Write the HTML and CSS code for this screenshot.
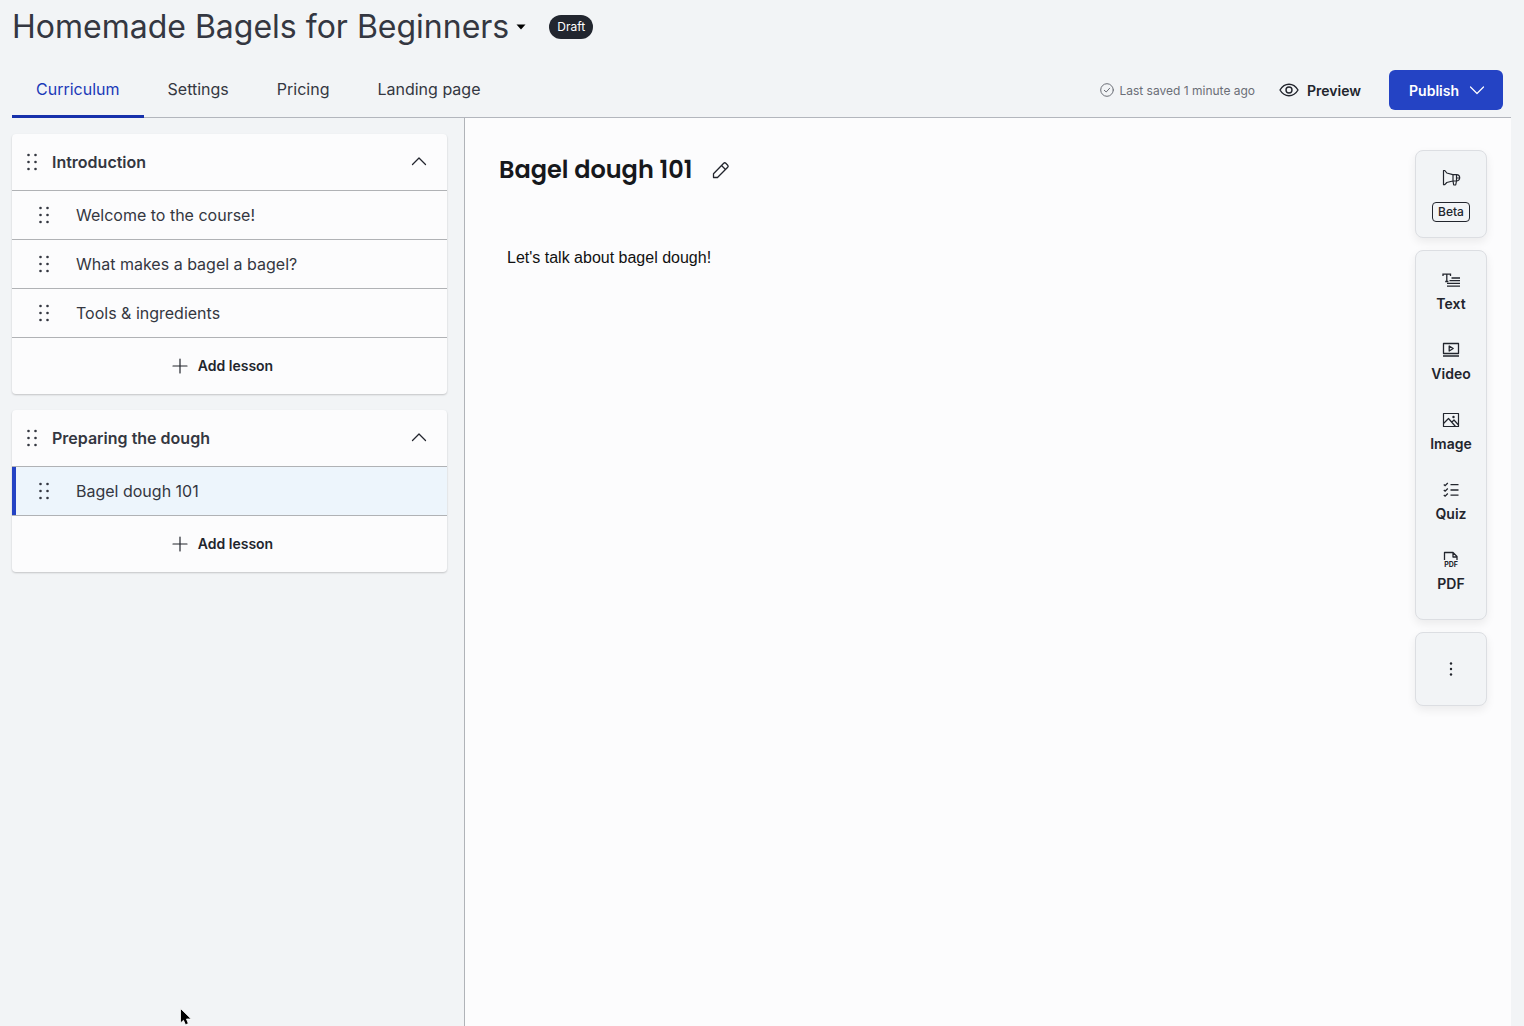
FILE: index.html
```html
<!DOCTYPE html>
<html lang="en">
<head>
    <meta charset="UTF-8">
    <meta name="viewport" content="width=device-width, initial-scale=1.0">
    <title>Homemade Bagels for Beginners</title>
    <link rel="stylesheet" href="styles.css">
</head>
<body>
    <!-- Shared icons -->
    <svg class="sprite" aria-hidden="true">
        <symbol id="grip" viewBox="0 0 12 18">
            <g fill="currentColor">
                <circle cx="2.500" cy="2" r="1.300"/><circle cx="9.500" cy="2" r="1.300"/>
                <circle cx="2.500" cy="9" r="1.300"/><circle cx="9.500" cy="9" r="1.300"/>
                <circle cx="2.500" cy="16" r="1.300"/><circle cx="9.500" cy="16" r="1.300"/>
            </g>
        </symbol>
        <symbol id="chevron-up" viewBox="0 0 16 16">
            <path d="M1.500 10.500 8 4l6.500 6.500" fill="none" stroke="currentColor" stroke-width="1.300" stroke-linecap="round" stroke-linejoin="round"/>
        </symbol>
        <symbol id="plus" viewBox="0 0 16 16">
            <path d="M8 1v14M1 8h14" fill="none" stroke="currentColor" stroke-width="1.200" stroke-linecap="round"/>
        </symbol>
    </svg>

    <header class="page-header">
        <div class="title-row">
            <h1>Homemade Bagels for Beginners</h1>
            <button class="title-menu" type="button" aria-label="Switch course">
                <svg width="10" height="6" viewBox="0 0 10 6"><path d="M0.500 0.500h9L5 5.500z" fill="currentColor"/></svg>
            </button>
            <span class="status">Draft</span>
        </div>
        <div class="nav-row">
            <nav class="tabs">
                <a class="tab active" href="#curriculum">Curriculum</a>
                <a class="tab" href="#settings">Settings</a>
                <a class="tab" href="#pricing">Pricing</a>
                <a class="tab" href="#landing">Landing page</a>
            </nav>
            <div class="actions">
                <span class="saved">
                    <svg width="14" height="14" viewBox="0 0 14 14" fill="none" stroke="currentColor" stroke-linecap="round" stroke-linejoin="round"><circle cx="7" cy="7" r="6.300"/><path d="M4.300 7.300 6.200 9l3.500-3.800"/></svg>
                    Last saved 1 minute ago
                </span>
                <button class="preview" type="button">
                    <svg width="20" height="14" viewBox="0 0 20 14" fill="none" stroke="currentColor" stroke-width="1.400" stroke-linejoin="round"><path d="M1 7c2.200-3.700 5.300-5.800 9-5.800S16.800 3.300 19 7c-2.200 3.700-5.300 5.800-9 5.800S3.200 10.700 1 7z"/><circle cx="10" cy="7" r="3"/></svg>
                    Preview
                </button>
                <button class="publish" type="button">
                    Publish
                    <svg width="16" height="16" viewBox="0 0 16 16" fill="none" stroke="currentColor" stroke-width="1.200" stroke-linecap="round" stroke-linejoin="round"><path d="M1.500 5 8 11.500 14.500 5"/></svg>
                </button>
            </div>
        </div>
    </header>

    <div class="workspace">
        <aside class="outline">
            <section class="chapter">
                <div class="chapter-head">
                    <svg class="grip"><use href="#grip"/></svg>
                    <h2>Introduction</h2>
                    <button class="collapse" type="button" aria-label="Collapse Introduction"><svg width="16" height="16"><use href="#chevron-up"/></svg></button>
                </div>
                <ul>
                    <li><svg class="grip"><use href="#grip"/></svg><a href="#welcome">Welcome to the course!</a></li>
                    <li><svg class="grip"><use href="#grip"/></svg><a href="#what">What makes a bagel a bagel?</a></li>
                    <li><svg class="grip"><use href="#grip"/></svg><a href="#tools">Tools &amp; ingredients</a></li>
                </ul>
                <button class="add-lesson" type="button"><svg width="16" height="16"><use href="#plus"/></svg>Add lesson</button>
            </section>
            <section class="chapter">
                <div class="chapter-head">
                    <svg class="grip"><use href="#grip"/></svg>
                    <h2>Preparing the dough</h2>
                    <button class="collapse" type="button" aria-label="Collapse Preparing the dough"><svg width="16" height="16"><use href="#chevron-up"/></svg></button>
                </div>
                <ul>
                    <li class="selected"><svg class="grip"><use href="#grip"/></svg><a href="#dough">Bagel dough 101</a></li>
                </ul>
                <button class="add-lesson" type="button"><svg width="16" height="16"><use href="#plus"/></svg>Add lesson</button>
            </section>
        </aside>

        <main class="editor">
            <article class="lesson">
                <div class="lesson-title">
                    <h2>Bagel dough 101</h2>
                    <button type="button" aria-label="Edit title">
                        <svg width="18" height="18" viewBox="0 0 18 18" fill="none" stroke="currentColor" stroke-width="1.300" stroke-linejoin="round"><path d="M1.500 16.500v-3.800L11.700 2.300a1.500 1.500 0 0 1 2.100 0l1.900 1.900a1.500 1.500 0 0 1 0 2.100L5.500 16.500z"/><path d="m9.500 4.500 4 4"/></svg>
                    </button>
                </div>
                <p class="lesson-text">Let's talk about bagel dough!</p>
            </article>

            <div class="toolbar">
                <div class="panel">
                    <button class="tool announce" type="button">
                        <svg width="20" height="20" viewBox="0 0 20 20" fill="none" stroke="currentColor" stroke-width="1.200" stroke-linejoin="round"><path d="M2.500 2.500v14.200h1.300l2-2.200 6-1.500h3.700a3.200 3.200 0 0 0 0-6.400h-3.700l-6-1.600-2-2.500zM12 6.600V13l.7 4h2l.8-4M15.500 6.600V13M15.500 10h3.200"/></svg>
                        <span class="beta">Beta</span>
                    </button>
                </div>
                <div class="panel blocks">
                    <button class="tool" type="button">
                        <svg width="20" height="20" viewBox="0 0 20 20" fill="none" stroke="currentColor" stroke-width="1.300"><path d="M2 5V3.200h7.500V5M5.800 3.200v7.300M4.200 10.500h3.200M10.500 7h8.500M8.500 9.600h10.500M6 12.400h13M6 15.200h13"/></svg>
                        Text
                    </button>
                    <button class="tool" type="button">
                        <svg width="20" height="20" viewBox="0 0 20 20" fill="none" stroke="currentColor" stroke-width="1.300" stroke-linejoin="round"><rect x="2.500" y="2.500" width="15" height="10"/><path d="M8.200 5v5l4-2.500zM2 15h16"/></svg>
                        Video
                    </button>
                    <button class="tool" type="button">
                        <svg width="20" height="20" viewBox="0 0 20 20" fill="none" stroke="currentColor" stroke-width="1.200" stroke-linejoin="round"><rect x="2.500" y="2.500" width="15" height="13"/><path d="m2.500 12.500 5-5 7 8M11 11l2-2 4.500 5"/><circle cx="12.500" cy="6" r=".6" fill="currentColor"/></svg>
                        Image
                    </button>
                    <button class="tool" type="button">
                        <svg width="20" height="20" viewBox="0 0 20 20" fill="none" stroke="currentColor" stroke-width="1.300"><path d="m2.800 3.500 1.300 1.200L6.800 2M2.800 9l1.300 1.200 2.700-2.700M2.800 14l1.300 1.200 2.700-2.700M9.500 3.700h8M9.500 9h8M9.500 14.200h8"/></svg>
                        Quiz
                    </button>
                    <button class="tool" type="button">
                        <svg width="20" height="20" viewBox="0 0 20 20" fill="none" stroke="currentColor" stroke-width="1.300" stroke-linejoin="round"><path d="M3.500 9V1.500h8.500l4 4V9M12 1.500V6h4"/><text class="pdf-mark" x="10" y="16" text-anchor="middle">PDF</text></svg>
                        PDF
                    </button>
                </div>
                <div class="panel">
                    <button class="tool more" type="button" aria-label="More blocks">
                        <svg width="20" height="20" viewBox="0 0 20 20" fill="currentColor"><circle cx="10" cy="4.500" r="1.200"/><circle cx="10" cy="10" r="1.200"/><circle cx="10" cy="15.500" r="1.200"/></svg>
                    </button>
                </div>
            </div>
        </main>
    </div>

    <svg class="pointer" width="12" height="18" viewBox="0 0 12 18" aria-hidden="true"><path d="M.5.500v14.500l3-2.700 2 4.500 2.800-1.200L6.500 11h4.700z" fill="#000" stroke="#fff" stroke-width=".8"/></svg>
</body>
</html>
```

FILE: styles.css
```css
* {
    box-sizing: border-box;
}
body {
    margin: 0;
    min-height: 100vh;
    display: flex;
    flex-direction: column;
    position: relative;
    font-family: Inter, "Liberation Sans", sans-serif;
    font-size: 16px;
    color: #343741;
    background-color: #f2f4f6;
}
h1, h2, p, ul {
    margin: 0;
    padding: 0;
}
a {
    color: inherit;
    text-decoration: none;
}
button {
    display: flex;
    align-items: center;
    margin: 0;
    padding: 0;
    border: 0;
    background: none;
    font: inherit;
    color: #22252d;
    cursor: pointer;
}
svg {
    display: block;
    flex-shrink: 0;
}
.sprite {
    display: none;
}

/* Header */
.page-header {
    margin: 0 13px 0 12px;
    border-bottom: 1px solid #b3b6bd;
}
.title-row {
    display: flex;
    align-items: center;
    height: 53px;
}
h1 {
    font-size: 32px;
    font-weight: 400;
    line-height: 40px;
}
.title-menu {
    margin-left: 7px;
    color: #000;
}
.status {
    margin-left: 23px;
    padding: 0 8px;
    border-radius: 12px;
    background-color: #22262f;
    color: #fff;
    font-size: 12px;
    line-height: 24px;
}
.nav-row {
    display: flex;
    justify-content: space-between;
    align-items: flex-end;
    height: 64px;
}
.tabs {
    display: flex;
}
.tab {
    height: 56px;
    margin-bottom: -1px;
    padding: 0 24px;
    line-height: 54px;
}
.tab.active {
    border-bottom: 3px solid #1731ab;
    color: #1c39b8;
}
.actions {
    display: flex;
    align-items: center;
    height: 54px;
    padding-right: 8px;
}
.saved {
    display: flex;
    align-items: center;
    gap: 5px;
    font-size: 12px;
    color: #6b6e76;
}
.preview {
    gap: 8px;
    margin-left: 24px;
    font-size: 14px;
    font-weight: 600;
}
.publish {
    gap: 10px;
    height: 40px;
    margin-left: 28px;
    padding: 0 18px 0 20px;
    border-radius: 6px;
    background-color: #2443c4;
    color: #fff;
    font-size: 14px;
    font-weight: 600;
}

/* Curriculum outline */
.workspace {
    flex: 1;
    display: flex;
    margin: 0 13px 0 12px;
}
.outline {
    flex: 0 0 453px;
    padding: 16px 17px 16px 0;
    border-right: 1px solid #b0b3b8;
}
.chapter {
    margin-bottom: 16px;
    border-radius: 4px;
    background-color: #fcfcfd;
    box-shadow: 0 1px 2px rgba(0, 0, 0, 0.2);
}
.chapter-head {
    display: flex;
    align-items: center;
    height: 56px;
    padding: 0 20px 0 14px;
}
.chapter-head h2 {
    flex: 1;
    margin-left: 14px;
    font-size: 16px;
    font-weight: 600;
}
.grip {
    width: 12px;
    height: 18px;
}
.chapter ul {
    list-style: none;
}
.chapter li {
    display: flex;
    align-items: center;
    height: 49px;
    padding-left: 26px;
    border-top: 1px solid #b0b2b5;
}
.chapter li a {
    flex: 1;
    margin-left: 26px;
}
.chapter li.selected {
    background-color: #edf5fc;
    box-shadow: inset 4px 0 #2443c4;
}
.add-lesson {
    justify-content: center;
    gap: 10px;
    width: 100%;
    height: 57px;
    padding: 0 14px 1px 0;
    border-top: 1px solid #b0b2b5;
    font-size: 14px;
    font-weight: 600;
}

/* Lesson editor */
.editor {
    flex: 1;
    display: flex;
    align-items: flex-start;
    padding: 32px 24px 32px 34px;
    background-color: #fcfcfd;
}
.lesson {
    flex: 1;
}
.lesson-title {
    display: flex;
    align-items: center;
    gap: 20px;
    height: 39px;
}
.lesson-title h2 {
    font-family: Poppins, Inter, sans-serif;
    font-size: 24px;
    font-weight: 600;
    color: #16181c;
}
.lesson-text {
    margin-top: 57px;
    padding: 0 8px;
    font-family: "Liberation Sans", Arial, sans-serif;
    line-height: 24px;
    color: #111;
}
.toolbar {
    flex: 0 0 72px;
    display: flex;
    flex-direction: column;
    gap: 12px;
}
.panel {
    display: flex;
    flex-direction: column;
    border: 1px solid #dcdee2;
    border-radius: 8px;
    background-color: #f2f4f6;
    box-shadow: 0 4px 10px rgba(0, 0, 0, 0.07);
}
.blocks {
    gap: 28px;
    padding: 20px 0 26px;
}
.tool {
    flex-direction: column;
    gap: 4px;
    font-size: 14px;
    font-weight: 600;
    line-height: 18px;
}
.announce {
    gap: 14px;
    padding: 17px 0 15px;
}
.beta {
    padding: 0 5px;
    border: 1px solid #22252d;
    border-radius: 4px;
    font-size: 12px;
    font-weight: 500;
}
.pdf-mark {
    fill: currentColor;
    stroke: none;
    font-size: 7px;
    font-weight: 700;
}
.more {
    padding: 26px 0;
}

.pointer {
    position: absolute;
    left: 180px;
    bottom: 0;
}
```
